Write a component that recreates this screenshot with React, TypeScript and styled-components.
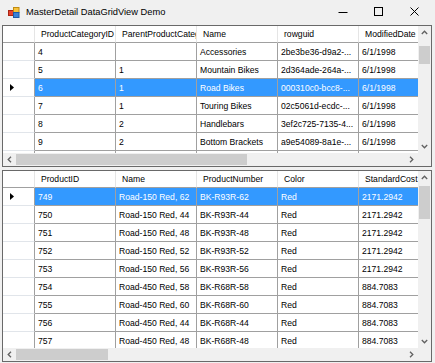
import React from "react";
import styled, { createGlobalStyle } from "styled-components";

const Global = createGlobalStyle`
  html, body { margin: 0; padding: 0; background: #f0f0f0; }
  body { font-family: "Liberation Sans", Arial, sans-serif; }
  #root { width: 435px; height: 363px; }
`;

const Window = styled.div`
  width: 435px;
  height: 363px;
  background: #f0f0f0;
  display: flex;
  flex-direction: column;
  overflow: hidden;
`;

const TitleBar = styled.div`
  height: 25px;
  flex-shrink: 0;
  display: flex;
  align-items: center;
  padding-left: 8px;
`;

const Title = styled.span`
  font-size: 9.3px;
  color: #000;
  margin-left: 6px;
  margin-top: -1px;
`;

const Controls = styled.div`
  margin-left: auto;
  display: flex;
  height: 100%;
  padding-right: 2px;
`;

const CtrlButton = styled.div`
  width: 36px;
  display: flex;
  align-items: center;
  justify-content: center;
  margin-top: -2px;
`;

const Body = styled.div`
  flex: 1;
  display: flex;
  flex-direction: column;
  gap: 3px;
  padding: 0 3px 1px 2px;
`;

const Frame = styled.div<{ $h: number }>`
  height: ${(p) => p.$h}px;
  box-sizing: border-box;
  border: 1px solid #696969;
  background: #fff;
  display: grid;
  grid-template-columns: minmax(0, 1fr) 13px;
  grid-template-rows: minmax(0, 1fr) 13px;
  overflow: hidden;
  flex-shrink: 0;
`;

const Viewport = styled.div`
  overflow: hidden;
  min-width: 0;
  min-height: 0;
  font-size: 8.6px;
  color: #000;
`;

const Row = styled.div<{ $h: number }>`
  display: flex;
  height: ${(p) => p.$h}px;
  width: max-content;
`;

const HeaderCell = styled.div<{ $w: number }>`
  width: ${(p) => p.$w}px;
  flex-shrink: 0;
  box-sizing: border-box;
  border-right: 1px solid #e5e5e5;
  border-bottom: 1px solid #a0a0a0;
  padding: 0 0 0 6px;
  display: flex;
  align-items: center;
  white-space: nowrap;
  overflow: hidden;
  background: #fff;
`;

const RowHead = styled.div`
  width: 32px;
  flex-shrink: 0;
  box-sizing: border-box;
  border-right: 1px solid #a0a0a0;
  border-bottom: 1px solid #e1e5ea;
  background: #fff;
  display: flex;
  align-items: center;
  padding-left: 7px;
`;

const Cell = styled.div<{ $w: number; $sel?: boolean }>`
  width: ${(p) => p.$w}px;
  flex-shrink: 0;
  box-sizing: border-box;
  border-right: 1px solid #a0a0a0;
  border-bottom: 1px solid #a0a0a0;
  padding: 0 0 0 3px;
  display: flex;
  align-items: center;
  white-space: nowrap;
  overflow: hidden;
  background: ${(p) => (p.$sel ? "#3399ff" : "#fff")};
  color: ${(p) => (p.$sel ? "#fff" : "#000")};
`;

const VScroll = styled.div`
  background: #f0f0f0;
  display: flex;
  flex-direction: column;
`;

const HScroll = styled.div`
  background: #f0f0f0;
  display: flex;
`;

const ArrowBox = styled.div`
  width: 13px;
  height: 13px;
  flex-shrink: 0;
  display: flex;
  align-items: center;
  justify-content: center;
`;

const VTrack = styled.div`
  flex: 1;
  display: flex;
  flex-direction: column;
`;

const HTrack = styled.div`
  flex: 1;
  display: flex;
`;

const VThumb = styled.div<{ $top: number; $len: number }>`
  margin: ${(p) => p.$top}px 1px 0 1px;
  height: ${(p) => p.$len}px;
  background: #cdcdcd;
`;

const HThumb = styled.div<{ $left: number; $len: number }>`
  margin: 1px 0 1px ${(p) => p.$left}px;
  width: ${(p) => p.$len}px;
  background: #cdcdcd;
`;

const Corner = styled.div`
  background: #f0f0f0;
`;

const Chevron = ({ dir }: { dir: "up" | "down" | "left" | "right" }) => {
  const pts =
    dir === "up"
      ? "0.8,4 3.5,1.2 6.2,4"
      : dir === "down"
      ? "0.8,1 3.5,3.8 6.2,1"
      : dir === "left"
      ? "4,0.8 1.2,3.5 4,6.2"
      : "1,0.8 3.8,3.5 1,6.2";
  const vert = dir === "up" || dir === "down";
  return (
    <svg width={vert ? 7 : 5} height={vert ? 5 : 7} viewBox={vert ? "0 0 7 5" : "0 0 5 7"}>
      <polyline points={pts} fill="none" stroke="#606060" strokeWidth="1.3" />
    </svg>
  );
};

const RowPointer = () => (
  <svg width="4" height="7" viewBox="0 0 4 7">
    <polygon points="0,0 4,3.5 0,7" fill="#000" />
  </svg>
);

const AppIcon = () => (
  <svg width="12" height="11" viewBox="0 0 12 11">
    <rect x="0.5" y="3.5" width="5" height="5" fill="#e8412c" stroke="#a82514" strokeWidth="1" />
    <rect x="5.5" y="0.5" width="5.5" height="5" fill="#f7c33b" stroke="#c08a10" strokeWidth="1" />
    <rect x="5.5" y="5.5" width="5.5" height="5" fill="#3b82d6" stroke="#1d5aa8" strokeWidth="1" />
  </svg>
);

type GridProps = {
  height: number;
  headerH: number;
  columns: string[];
  rows: string[][];
  selected: number;
  vThumbTop: number;
  vThumbLen: number;
  hThumbLen: number;
};

const COL_W = 81;

const DataGrid = ({ height, headerH, columns, rows, selected, vThumbTop, vThumbLen, hThumbLen }: GridProps) => (
  <Frame $h={height}>
    <Viewport>
      <Row $h={headerH}>
        <HeaderCell $w={32} />
        {columns.map((c) => (
          <HeaderCell key={c} $w={COL_W}>
            {c}
          </HeaderCell>
        ))}
      </Row>
      {rows.map((r, i) => (
        <Row key={i} $h={18}>
          <RowHead>{i === selected ? <RowPointer /> : null}</RowHead>
          {r.map((v, j) => (
            <Cell key={j} $w={COL_W} $sel={i === selected}>
              {v}
            </Cell>
          ))}
        </Row>
      ))}
    </Viewport>
    <VScroll>
      <ArrowBox>
        <Chevron dir="up" />
      </ArrowBox>
      <VTrack>
        <VThumb $top={vThumbTop} $len={vThumbLen} />
      </VTrack>
      <ArrowBox>
        <Chevron dir="down" />
      </ArrowBox>
    </VScroll>
    <HScroll>
      <ArrowBox>
        <Chevron dir="left" />
      </ArrowBox>
      <HTrack>
        <HThumb $left={0} $len={hThumbLen} />
      </HTrack>
      <ArrowBox>
        <Chevron dir="right" />
      </ArrowBox>
    </HScroll>
    <Corner />
  </Frame>
);

const masterCols = ["ProductCategoryID", "ParentProductCategoryID", "Name", "rowguid", "ModifiedDate"];
const masterRows = [
  ["4", "", "Accessories", "2be3be36-d9a2-...", "6/1/1998"],
  ["5", "1", "Mountain Bikes", "2d364ade-264a-...", "6/1/1998"],
  ["6", "1", "Road Bikes", "000310c0-bcc8-...", "6/1/1998"],
  ["7", "1", "Touring Bikes", "02c5061d-ecdc-...", "6/1/1998"],
  ["8", "2", "Handlebars", "3ef2c725-7135-4...", "6/1/1998"],
  ["9", "2", "Bottom Brackets", "a9e54089-8a1e-...", "6/1/1998"],
  ["", "", "", "", ""],
];

const detailCols = ["ProductID", "Name", "ProductNumber", "Color", "StandardCost"];
const detailRows = [
  ["749", "Road-150 Red, 62", "BK-R93R-62", "Red", "2171.2942"],
  ["750", "Road-150 Red, 44", "BK-R93R-44", "Red", "2171.2942"],
  ["751", "Road-150 Red, 48", "BK-R93R-48", "Red", "2171.2942"],
  ["752", "Road-150 Red, 52", "BK-R93R-52", "Red", "2171.2942"],
  ["753", "Road-150 Red, 56", "BK-R93R-56", "Red", "2171.2942"],
  ["754", "Road-450 Red, 58", "BK-R68R-58", "Red", "884.7083"],
  ["755", "Road-450 Red, 60", "BK-R68R-60", "Red", "884.7083"],
  ["756", "Road-450 Red, 44", "BK-R68R-44", "Red", "884.7083"],
  ["757", "Road-450 Red, 48", "BK-R68R-48", "Red", "884.7083"],
];

export default function App() {
  return (
    <>
      <Global />
      <Window>
        <TitleBar>
          <AppIcon />
          <Title>MasterDetail DataGridView Demo</Title>
          <Controls>
            <CtrlButton>
              <svg width="10" height="10" viewBox="0 0 10 10">
                <line x1="0.5" y1="5.5" x2="9.5" y2="5.5" stroke="#000" strokeWidth="1" />
              </svg>
            </CtrlButton>
            <CtrlButton>
              <svg width="10" height="10" viewBox="0 0 10 10">
                <rect x="0.5" y="0.5" width="8" height="8" fill="none" stroke="#000" strokeWidth="1" />
              </svg>
            </CtrlButton>
            <CtrlButton>
              <svg width="10" height="10" viewBox="0 0 10 10">
                <line x1="0.5" y1="0.5" x2="8.5" y2="8.5" stroke="#000" strokeWidth="1" />
                <line x1="8.5" y1="0.5" x2="0.5" y2="8.5" stroke="#000" strokeWidth="1" />
              </svg>
            </CtrlButton>
          </Controls>
        </TitleBar>
        <Body>
          <DataGrid
            height={142}
            headerH={17}
            columns={masterCols}
            rows={masterRows}
            selected={2}
            vThumbTop={7}
            vThumbLen={18}
            hThumbLen={231}
          />
          <DataGrid
            height={192}
            headerH={17}
            columns={detailCols}
            rows={detailRows}
            selected={0}
            vThumbTop={2}
            vThumbLen={33}
            hThumbLen={92}
          />
        </Body>
      </Window>
    </>
  );
}
